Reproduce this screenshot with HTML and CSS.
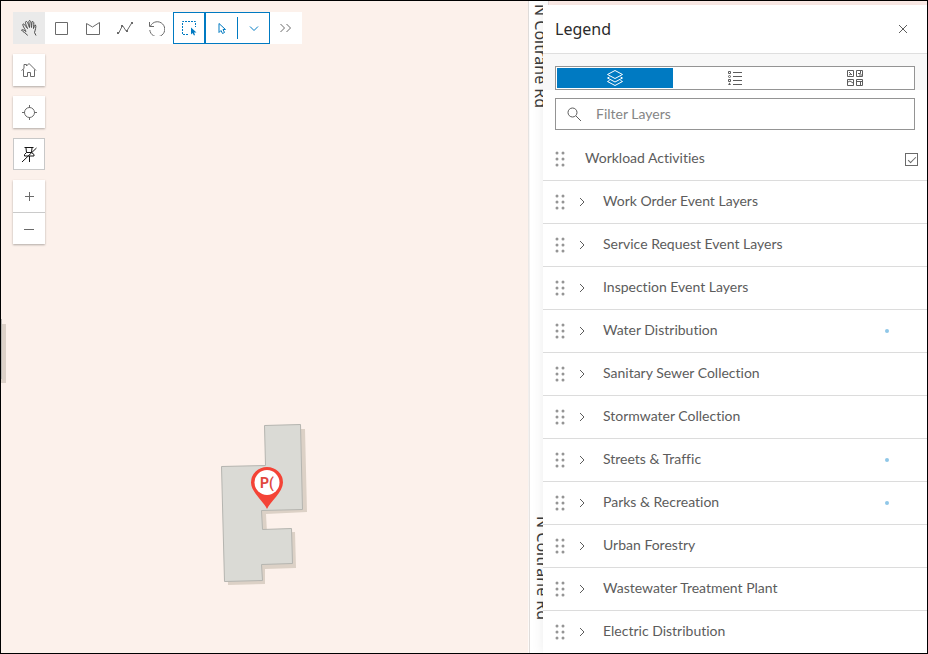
FILE: index.html
```
<!DOCTYPE html>
<html lang="en">
<head>
    <meta charset="UTF-8">
    <meta name="viewport" content="width=device-width, initial-scale=1.0">
    <title>Map Legend</title>
    <link rel="stylesheet" href="styles.css">
</head>
<body>
    <!-- Map drawing -->
    <svg class="map" aria-hidden="true">
        <rect x="547" y="0" width="2000" height="2000" fill="#ffeeea"/>
        <path d="M527 0H548V2000H528Z" fill="#ffffff"/>
        <path d="M527.500 0L528.500 653V2000" fill="none" stroke="#dedbd9"/>
        <path d="M547.500 0V2000" fill="none" stroke="#e6dcdc"/>
        <rect x="-4" y="323" width="9" height="59" fill="#dcd1c8"/>
        <rect x="-4" y="318" width="5" height="60" fill="#b8b6b2"/>
        <path d="M268 428L304 428L306 511L265 513L266 532L294 531L295 567L264 568L264 583L227 584L225 470L268 469Z" fill="#dcd1c6"/>
        <path d="M263.500 424.500L299.500 423.500L301.500 508.500L260.500 509.500L261.500 528.500L290.500 527.500L291.500 562.500L260.500 563.500L261.500 579.500L223.500 580.500L220.500 465.500L264.500 464.500Z" fill="#dadad5" stroke="#b5b5b0"/>
        <text class="road-name" transform="translate(534 3) rotate(90)">N Coltrane Rd</text>
        <text class="road-name" transform="translate(536 515) rotate(90)">N Coltrane Rd</text>
        <path d="M266 508C263 501 250 491 250 481.500A16 15.500 0 0 1 282 481.500C282 491 269 501 266 508Z" fill="#f44336"/>
        <circle cx="266" cy="481.500" r="12.500" fill="#ffffff"/>
        <text class="pin-name" x="259" y="487">P(</text>
    </svg>

    <div class="app">
        <!-- Map tools -->
        <div class="tools">
            <div class="toolbar">
                <button class="tool active" aria-label="Pan">
                    <svg class="icon" viewBox="0 0 16 16"><path d="M6.500 15.500C5.500 13 1.500 12 .5 10C1.500 9 3.500 10.500 5 11.500C4 9 1 5 2 4C3.500 3.500 5 7 6.500 8.500C5.500 6 3.500 2 5 1.500C6.500 1 7.500 5 8.500 7.500C8.500 4 7 1 8.500 .5C10.500 .5 10 5 10.500 7.500C11 4 10.500 1 12 1.500C13.500 2 12.500 6 12.500 8.500C13 7 13.500 5 14.500 5C15.500 6 14 11 13.500 12.500L15 15.500"/></svg>
                </button>
                <button class="tool" aria-label="Rectangle">
                    <svg class="icon" viewBox="0 0 16 16"><path d="M2.500 2.500h12v12h-12z"/></svg>
                </button>
                <button class="tool" aria-label="Polygon">
                    <svg class="icon" viewBox="0 0 16 16"><path d="M1.500 3.500L7.500 7L14.500 2.500V14.500H1.500Z"/></svg>
                </button>
                <button class="tool" aria-label="Line">
                    <svg class="icon" viewBox="0 0 16 16"><path d="M1.500 13.500L5.500 5.500L9.500 11.500L15 2.500"/><path class="solid" d="M0 12h2v2H0zM4 5h2v2H4zM9 10h2v2H9zM14 2h2v2h-2z"/></svg>
                </button>
                <button class="tool" aria-label="Undo">
                    <svg class="icon" viewBox="0 0 16 16"><path d="M1.500 6A7.500 7.500 0 1 1 .8 10M.5 2V6.500H5"/></svg>
                </button>
                <button class="tool outlined" aria-label="Select by rectangle">
                    <svg class="icon" viewBox="0 0 16 16"><path stroke-dasharray="2 1" d="M7 14.500H1.500V1.500H14.500V7"/><path class="solid" d="M10 7.500V14.500L11.500 13L13 15.500L14 15L13 12.500H15.500Z"/></svg>
                </button>
                <div class="split">
                    <button class="tool" aria-label="Select">
                        <svg class="icon" viewBox="0 0 16 16"><path d="M5 3.500V12.500L7 10.500L8.500 13.500L10.500 12.500L9 9.500H11.500Z"/></svg>
                    </button>
                    <button class="tool" aria-label="Select options">
                        <svg class="icon" viewBox="0 0 16 16"><path d="M4 6.500L8 10.500L12 6.500"/></svg>
                    </button>
                </div>
                <button class="tool" aria-label="More tools">
                    <svg class="icon" viewBox="0 0 16 16"><path d="M2.500 4L6.500 8L2.500 12M8.500 4L12.500 8L8.500 12"/></svg>
                </button>
            </div>

            <button class="tool widget" aria-label="Home">
                <svg class="icon" viewBox="0 0 16 16"><path d="M.5 8.500L3 6.500V2.500H5.500V4L8 1.500L15 8.500M2.500 7.500V14.500H6.500V10.500H9.500V14.500H13.500V7.500"/></svg>
            </button>
            <button class="tool widget" aria-label="My location">
                <svg class="icon" viewBox="0 0 16 16"><circle cx="8.500" cy="8.500" r="5"/><path d="M8.500 1V4M8.500 13V16M1 8.500H4M13 8.500H16"/></svg>
            </button>
            <button class="tool widget framed" aria-label="Unpin">
                <svg class="icon" viewBox="0 0 16 16"><path d="M3.500 1.500H12.500M5 2L5.500 6.500M11 2L10.500 6.500M5.500 6.500L3.500 8.500V10H13V8.500L10.500 6.500ZM8.500 10V16M1 16L15.500 2"/></svg>
            </button>
            <div class="zoom">
                <button class="tool" aria-label="Zoom in">
                    <svg class="icon" viewBox="0 0 16 16"><path d="M4 8.500H13M8.500 4V13"/></svg>
                </button>
                <button class="tool" aria-label="Zoom out">
                    <svg class="icon" viewBox="0 0 16 16"><path d="M3 8.500H13"/></svg>
                </button>
            </div>
        </div>

        <!-- Legend panel -->
        <div class="panel">
            <div class="panel-header">
                <h1>Legend</h1>
                <button class="close" aria-label="Close">
                    <svg class="icon" viewBox="0 0 16 16"><path d="M4 4L12 12M12 4L4 12"/></svg>
                </button>
            </div>
            <div class="tab-area">
                <div class="tabs">
                    <button class="tab selected" aria-label="Layers">
                        <svg class="icon" viewBox="0 0 16 16"><path d="M8 .5L15.500 4.500L8 8.500L.5 4.500ZM2.500 7L.5 8L8 12L15.500 8L13.500 7M2.500 10.500L.5 11.500L8 15.500L15.500 11.500L13.500 10.500"/></svg>
                    </button>
                    <button class="tab" aria-label="Legend list">
                        <svg class="icon" viewBox="0 0 16 16"><path d="M1.500 1.500h2v2h-2zM1.500 9.500h2v2h-2zM6 2.500H15M6 6.500H15M6 10.500H15M6 14.500H15"/><circle cx="2.500" cy="6.500" r="1"/><path class="solid" d="M2.500 12.500L4 15H1Z"/></svg>
                    </button>
                    <button class="tab" aria-label="Basemaps">
                        <svg class="icon" viewBox="0 0 16 16"><path d="M.5 .5h6v6h-6zM9.500 .5h6v6h-6zM.5 9.500h6v6h-6zM9.500 9.500h6v6h-6zM2 2L5 5M2 5L4 4M11 3.500H13.500V1M12 5H15M1 12L3 11L6 13M10 11.500H15M13.500 12V15"/></svg>
                    </button>
                </div>
            </div>
            <div class="search">
                <svg class="icon" viewBox="0 0 16 16"><circle cx="6.500" cy="6.500" r="4.500"/><path d="M10 10L15 15"/></svg>
                <input type="text" placeholder="Filter Layers" aria-label="Filter Layers">
            </div>
            <ul class="layers" id="layers">
                <li class="layer">
                    <svg class="handle" viewBox="0 0 10 16"><use href="#dots"/></svg>
                    <label class="name" for="workload">Workload Activities</label>
                    <input class="check" type="checkbox" id="workload" checked>
                </li>
            </ul>
        </div>
    </div>

    <svg class="symbols" aria-hidden="true">
        <g id="dots">
            <circle cx="2" cy="2" r="1.500"/><circle cx="8" cy="2" r="1.500"/>
            <circle cx="2" cy="8" r="1.500"/><circle cx="8" cy="8" r="1.500"/>
            <circle cx="2" cy="14" r="1.500"/><circle cx="8" cy="14" r="1.500"/>
        </g>
    </svg>

    <script>
        // Layer groups, loading = show the blue dot
        const groups = [
            { name: "Work Order Event Layers" },
            { name: "Service Request Event Layers" },
            { name: "Inspection Event Layers" },
            { name: "Water Distribution", loading: true },
            { name: "Sanitary Sewer Collection" },
            { name: "Stormwater Collection" },
            { name: "Streets & Traffic", loading: true },
            { name: "Parks & Recreation", loading: true },
            { name: "Urban Forestry" },
            { name: "Wastewater Treatment Plant" },
            { name: "Electric Distribution" }
        ];

        document.getElementById("layers").innerHTML += groups
            .map(
                group =>
                    `<li class="layer">
                        <svg class="handle" viewBox="0 0 10 16"><use href="#dots"/></svg>
                        <button class="expand" aria-label="Expand">
                            <svg class="icon" viewBox="0 0 16 16"><path d="M5 4L9 8L5 12"/></svg>
                        </button>
                        <span class="name">${group.name.replace("&", "&amp;")}</span>
                        ${group.loading ? '<span class="dot"></span>' : ""}
                    </li>`
            )
            .join("");
    </script>
</body>
</html>
```

FILE: styles.css
```
/* General Styles */
* {
    box-sizing: border-box;
}
body {
    position: relative;
    margin: 0;
    height: 100vh;
    overflow: hidden;
    border: 1px solid #000000;
    background: #fcf1eb;
    color: #5c5c5c;
    font-family: Lato, sans-serif;
    font-size: 14px;
    font-variant-ligatures: none;
}
button {
    display: flex;
    justify-content: center;
    align-items: center;
    padding: 0;
    border: none;
    background: transparent;
    color: inherit;
    cursor: pointer;
}
.icon {
    width: 16px;
    height: 16px;
    flex: none;
    fill: none;
    stroke: currentColor;
}
.icon .solid {
    fill: currentColor;
    stroke: none;
}
.symbols {
    display: none;
}

/* Map */
.map {
    position: absolute;
    top: 0;
    left: 0;
    width: 100%;
    height: 100%;
}
.road-name {
    font-family: "Noto Sans", sans-serif;
    font-size: 16px;
    fill: #3c3c3c;
}
.pin-name {
    font-family: Roboto, sans-serif;
    font-size: 14px;
    font-weight: bold;
    fill: #e0483e;
}
.app {
    position: relative;
    display: flex;
    justify-content: space-between;
    height: 100%;
}

/* Tools */
.tools {
    display: flex;
    flex-direction: column;
    align-items: flex-start;
    gap: 10px;
    padding: 11px 12px;
}
.toolbar {
    display: flex;
    background: #ffffff;
}
.tool {
    width: 32px;
    height: 32px;
    background: #ffffff;
    color: #6a6a6a;
}
.tool.active {
    background: #eaeaea;
    color: #4a4a4a;
}
.tool.outlined, .split {
    border: 1px solid #007ac2;
}
.tool.outlined, .split .tool {
    color: #007ac2;
}
.split {
    display: flex;
    align-items: center;
    width: 65px;
    height: 32px;
}
.split .tool {
    flex: 1;
    height: 22px;
}
.split .tool + .tool {
    border-left: 1px solid #007ac2;
}
.widget, .zoom {
    box-shadow: 0 1px 2px rgba(0, 0, 0, 0.3);
}
.widget.framed {
    border: 1px solid #c8c8c8;
    box-shadow: none;
    color: #151515;
}
.zoom .tool + .tool {
    border-top: 1px solid #cacaca;
}

/* Legend panel */
.panel {
    display: flex;
    flex-direction: column;
    width: 384px;
    margin-top: 4px;
    background: #ffffff;
    box-shadow: 0 0 12px rgba(0, 0, 0, 0.08);
}
.panel-header {
    display: flex;
    flex: none;
    justify-content: space-between;
    align-items: center;
    height: 49px;
    padding: 0 16px 0 12px;
    border-bottom: 1px solid #dfdfdf;
}
.panel-header h1 {
    margin: 0;
    color: #2b2b2b;
    font-family: "Noto Sans", sans-serif;
    font-size: 16px;
    font-weight: normal;
}
.tab-area {
    padding: 12px 12px 0;
    background: #f8f8f8;
}
.tabs {
    display: flex;
    height: 24px;
    background: #ffffff;
    outline: 1px solid #949494;
    outline-offset: -1px;
}
.tab {
    flex: 1;
    padding: 2px;
}
.tab.selected {
    background: #007ac2 content-box;
    color: #ffffff;
}
.search {
    display: flex;
    flex: none;
    align-items: center;
    gap: 14px;
    height: 32px;
    margin: 8px 12px;
    padding: 0 10px;
    border: 1px solid #949494;
}
.search input {
    flex: 1;
    min-width: 0;
    padding: 0 0 2px;
    border: none;
    outline: none;
    background: transparent;
    font: inherit;
}
.search input::placeholder {
    color: #858585;
}
.layers {
    flex: 1;
    min-height: 0;
    margin: 0;
    padding: 0;
    overflow: hidden;
    list-style: none;
}
.layer {
    display: flex;
    align-items: center;
    height: 43px;
    padding: 0 9px 0 12px;
    border-bottom: 1px solid #dcdcdc;
}
.handle {
    width: 10px;
    height: 16px;
    fill: #959595;
}
.expand {
    width: 16px;
    height: 16px;
    margin-left: 10px;
}
.name {
    flex: 1;
    padding-bottom: 4px;
    margin-left: 20px;
}
.expand + .name {
    margin-left: 12px;
}
.dot {
    width: 4px;
    height: 4px;
    margin-right: 29px;
    border-radius: 50%;
    background: #8fc7e8;
}
.check {
    appearance: none;
    width: 13px;
    height: 13px;
    margin: 0;
    outline: 1px solid #6a6a6a;
    outline-offset: -1px;
}
.check:checked::before {
    content: "";
    display: block;
    width: 7px;
    height: 3px;
    margin: 4px 3px;
    border-left: 1px solid #6a6a6a;
    border-bottom: 1px solid #6a6a6a;
    transform: rotate(-45deg);
}
```
